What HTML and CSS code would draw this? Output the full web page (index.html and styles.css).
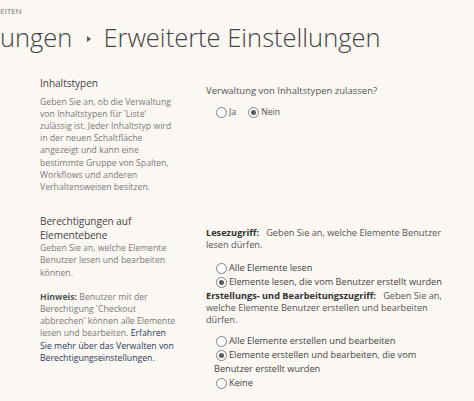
FILE: index.html
```html
<!DOCTYPE html>
<html lang="de">
<head>
<meta charset="utf-8">
<link rel="stylesheet" href="styles.css">
</head>
<body>
<div class="page">
  <div class="crumb">EITEN</div>
  <h1 class="title"><span>ungen</span><span class="sep"></span><span>Erweiterte Einstellungen</span></h1>

  <div class="section s1">
    <div class="left">
      <div class="heading">Inhaltstypen</div>
      <div class="desc">Geben Sie an, ob die Verwaltung von Inhaltstypen für 'Liste' zulässig ist. Jeder Inhaltstyp wird in der neuen Schaltfläche angezeigt und kann eine bestimmte Gruppe von Spalten, Workflows und anderen Verhaltensweisen besitzen.</div>
    </div>
    <div class="right r1">
      <div class="question">Verwaltung von Inhaltstypen zulassen?</div>
      <div class="inline-radios">
        <span class="radio"><span class="dot"></span>Ja</span>
        <span class="radio on"><span class="dot"></span>Nein</span>
      </div>
    </div>
  </div>

  <div class="section s2">
    <div class="left">
      <div class="heading">Berechtigungen auf Elementebene</div>
      <div class="desc">Geben Sie an, welche Elemente Benutzer lesen und bearbeiten können.</div>
      <div class="desc note"><b>Hinweis:</b> Benutzer mit der Berechtigung 'Checkout abbrechen' können alle Elemente lesen und bearbeiten. <a class="link">Erfahren Sie mehr über das Verwalten von Berechtigungseinstellungen.</a></div>
    </div>
    <div class="right r2">
      <div class="para"><b>Lesezugriff:</b>&nbsp;&nbsp; Geben Sie an, welche Elemente Benutzer lesen dürfen.</div>
      <div class="radios first">
        <div class="radio"><span class="dot"></span>Alle Elemente lesen</div>
        <div class="radio on"><span class="dot"></span>Elemente lesen, die vom Benutzer erstellt wurden</div>
      </div>
      <div class="para"><b>Erstellungs- und Bearbeitungszugriff:</b>&nbsp;&nbsp; Geben Sie an, welche Elemente Benutzer erstellen und bearbeiten dürfen.</div>
      <div class="radios second">
        <div class="radio"><span class="dot"></span>Alle Elemente erstellen und bearbeiten</div>
        <div class="radio on"><span class="dot"></span>Elemente erstellen und bearbeiten, die vom</div>
        <div class="wrapline">Benutzer erstellt wurden</div>
        <div class="radio"><span class="dot"></span>Keine</div>
      </div>
    </div>
  </div>
</div>
</body>
</html>
```
FILE: styles.css
```css
html, body {
  margin: 0;
  padding: 0;
  background: #fbf7f2;
}
body {
  font-family: "Open Sans", "Noto Sans", "Liberation Sans", sans-serif;
  color: #444;
  height: 401px;
  overflow: hidden;
}
.crumb {
  font-size: 8px;
  color: #777;
  padding-top: 6px;
  line-height: 10px;
}
.title {
  margin: 3px 0 0 0;
  font-size: 25.5px;
  font-weight: 300;
  line-height: 36px;
  color: #444;
  display: flex;
  align-items: center;
  white-space: nowrap;
}
.sep {
  display: inline-block;
  width: 0;
  height: 0;
  border-left: 4px solid #555;
  border-top: 3px solid transparent;
  border-bottom: 3px solid transparent;
  margin: 4px 12px 0 15px;
}
.section {
  display: grid;
  grid-template-columns: 206px 1fr;
  font-size: 8.7px;
  line-height: 12.2px;
}
.s1 { margin-top: 22px; }
.s2 { margin-top: 22px; }
.left {
  padding-left: 40px;
  padding-right: 29px;
}
.heading {
  font-size: 10px;
  line-height: 13.5px;
  color: #444;
}
.desc {
  color: #7a7a7a;
  margin-top: 5px;
}
.s2 .desc { margin-top: 0; }
.s2 .desc.note { margin-top: 12px; }
.note b { color: #555; }
.link { color: #2a3a5e; }
.r1 { padding-top: 8px; }
.question { color: #555; font-size: 9.5px; }
.inline-radios {
  display: flex;
  gap: 12px;
  margin-top: 9px;
  padding-left: 10px;
  color: #555;
}
.radio {
  display: flex;
  align-items: center;
  gap: 2px;
}
.dot {
  box-sizing: border-box;
  width: 11px;
  height: 11px;
  border: 1px solid #808080;
  border-radius: 50%;
  background: #fff;
  position: relative;
  flex: none;
}
.on .dot::after {
  content: "";
  position: absolute;
  left: 2px;
  top: 2px;
  width: 5px;
  height: 5px;
  border-radius: 50%;
  background: #5a5a5a;
}
.r2 { padding-top: 12px; padding-right: 14px; font-size: 9.2px; color: #555; }
.para b { color: #333; }
.radios { padding-left: 10px; color: #444; }
.radios.first { margin-top: 10px; }
.radios.second { margin-top: 8px; }
.radios .radio { height: 14px; }
.wrapline { margin-left: -2px; height: 14px; line-height: 14px; }
```
